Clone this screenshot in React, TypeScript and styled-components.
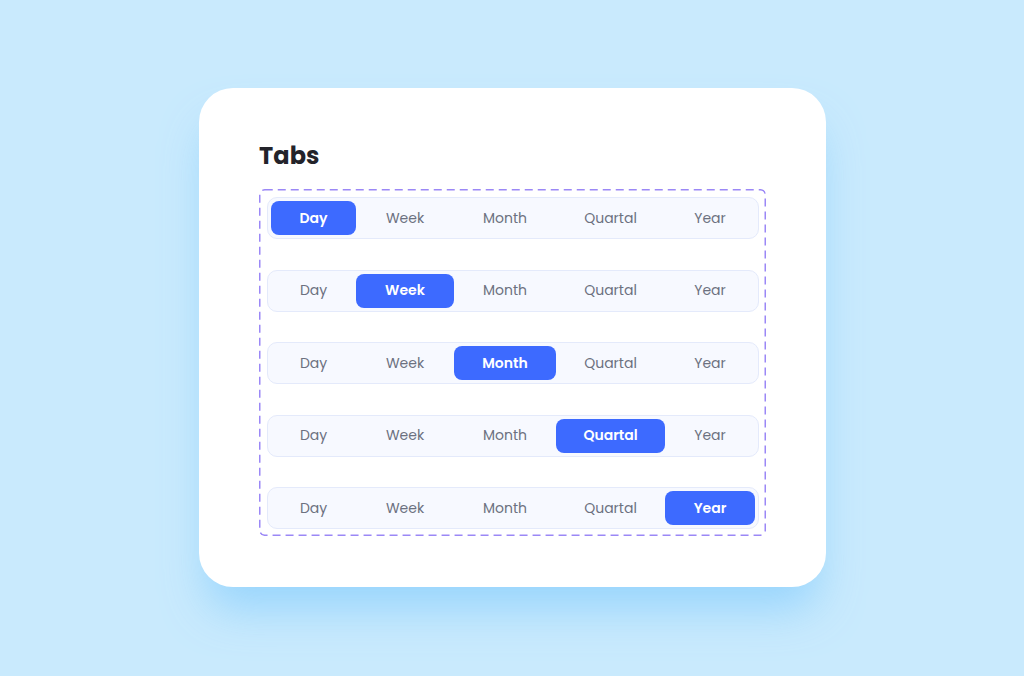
import React from "react";
import styled, { createGlobalStyle } from "styled-components";

const GlobalStyle = createGlobalStyle`
  html, body {
    margin: 0;
    padding: 0;
    background: #c9eafd;
  }
  body {
    font-family: "Poppins", Inter, "Noto Sans", sans-serif;
  }
`;

const dashed = encodeURIComponent(
  `<svg xmlns="http://www.w3.org/2000/svg" width="100%" height="100%"><rect x="0.75" y="0.75" width="calc(100% - 1.5px)" height="calc(100% - 1.5px)" rx="5" ry="5" fill="none" stroke="#9b88f6" stroke-width="1.5" stroke-dasharray="8 5"/></svg>`
);

const Page = styled.div`
  width: 1024px;
  height: 676px;
  box-sizing: border-box;
  padding-top: 88px;
  display: flex;
  justify-content: center;
  align-items: flex-start;
  background: #c9eafd;
`;

const Card = styled.div`
  width: 627px;
  height: 499px;
  box-sizing: border-box;
  margin-left: 1px;
  padding: 54px 60px 0 60px;
  background: #ffffff;
  border-radius: 34px;
  box-shadow: 0 30px 44px -8px rgba(140, 208, 252, 0.8);
`;

const Title = styled.h1`
  margin: 0 0 19px 0;
  font-size: 24px;
  line-height: 28px;
  font-weight: 700;
  color: #23232a;
  letter-spacing: 0.1px;
`;

const Frame = styled.div`
  width: 507px;
  box-sizing: border-box;
  padding: 8px 8px 7px 8px;
  border-radius: 5px;
  background-image: url("data:image/svg+xml,${dashed}");
  display: flex;
  flex-direction: column;
  gap: 30.5px;
`;

const Bar = styled.div`
  align-self: flex-start;
  display: flex;
  padding: 3px;
  height: 42px;
  box-sizing: border-box;
  background: #f7f9ff;
  border: 1px solid #e4eafb;
  border-radius: 10px;
`;

const Tab = styled.button<{ $active: boolean; $w: number }>`
  width: ${(p) => p.$w}px;
  height: 34px;
  padding: 0;
  border: none;
  border-radius: 8px;
  font-family: "Poppins", Inter, "Noto Sans", sans-serif;
  font-size: 14px;
  font-weight: ${(p) => (p.$active ? 600 : 400)};
  color: ${(p) => (p.$active ? "#ffffff" : "#6c7180")};
  background: ${(p) => (p.$active ? "#3d6aff" : "transparent")};
  cursor: pointer;
`;

const tabs = [
  { label: "Day", w: 85 },
  { label: "Week", w: 98 },
  { label: "Month", w: 102 },
  { label: "Quartal", w: 109 },
  { label: "Year", w: 90 },
];

export default function App() {
  return (
    <>
      <GlobalStyle />
      <Page>
        <Card>
          <Title>Tabs</Title>
          <Frame>
            {tabs.map((_, row) => (
              <Bar key={row}>
                {tabs.map((t, i) => (
                  <Tab key={t.label} $active={i === row} $w={t.w}>
                    {t.label}
                  </Tab>
                ))}
              </Bar>
            ))}
          </Frame>
        </Card>
      </Page>
    </>
  );
}
